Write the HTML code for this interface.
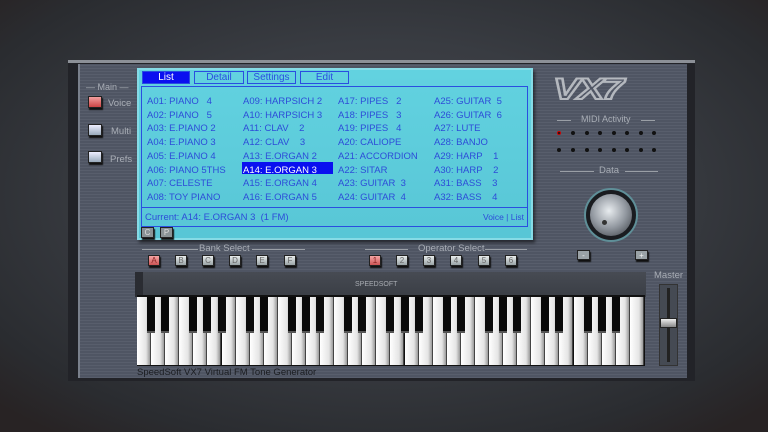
<!DOCTYPE html>
<html><head><meta charset="utf-8"><style>
*{margin:0;padding:0;box-sizing:border-box}
body{width:768px;height:432px;overflow:hidden;position:relative;font-family:"Liberation Sans",sans-serif;
background:radial-gradient(ellipse 70% 70% at 50% 45%,#44484f 0%,#393c42 50%,#2a2c30 85%,#282324 100%);}
.a{position:absolute}
#panel{left:68px;top:60px;width:627px;height:321px;background:#222328;border-top:3px solid #8c9097;}
#inner{left:78px;top:64px;width:609px;height:314px;background:repeating-linear-gradient(0deg,#585e6c 0 1px,#4f5563 1px 3px);border-left:2px solid #7a808c}
#lcd{left:137px;top:68px;width:396px;height:172px;background:linear-gradient(#62d2e0,#58c6d6);border:2px solid #86dbe6;box-shadow:2px 3px 3px rgba(0,0,0,.5)}
.tab{position:absolute;top:71px;height:13px;border:1px solid #2a4ee0;color:#2a4ee0;font-size:10px;text-align:center;line-height:11px}
.t{position:absolute;font-size:9.5px;color:#2d4cd8;white-space:nowrap}
.btn{position:absolute;width:12px;height:11px;background:linear-gradient(#e8ecec,#9aa4a6);border:1px solid #222;font-size:8px;text-align:center;line-height:9px;color:#666;box-shadow:1px 2px 1px #111}
.lbl{position:absolute;font-size:9.5px;color:#a9aeb6;white-space:nowrap}
.line{position:absolute;height:1px;background:#9a9fa6}
.dot{position:absolute;width:4px;height:4px;border-radius:2px;background:#111}
.wk{position:absolute;top:297px;height:68px;background:linear-gradient(90deg,#fff,#e4e4e4 70%,#9a9a9a);border-right:1px solid #444}
.bk{position:absolute;top:297px;width:8px;height:36px;background:#0a0a0a;border-bottom:2px solid #555}
</style></head><body>
<div id="panel" class="a"></div>
<div id="inner" class="a"></div>
<div class="lbl" style="left:86px;top:82px;font-size:9px">— Main —</div>
<div class="a" style="left:88px;top:96px;width:14px;height:12px;background:linear-gradient(#f3a0a0,#c44);border:1px solid #222;box-shadow:1px 2px 1px #111"></div>
<div class="lbl" style="left:108px;top:98px">Voice</div>
<div class="a" style="left:88px;top:124px;width:14px;height:12px;background:linear-gradient(#eef,#9ab);border:1px solid #222;box-shadow:1px 2px 1px #111"></div>
<div class="lbl" style="left:111px;top:126px">Multi</div>
<div class="a" style="left:88px;top:151px;width:14px;height:12px;background:linear-gradient(#eef,#9ab);border:1px solid #222;box-shadow:1px 2px 1px #111"></div>
<div class="lbl" style="left:110px;top:154px">Prefs</div>

<div id="lcd" class="a"></div>
<div class="tab" style="left:142px;width:48px;background:#0a10f0;color:#fff">List</div>
<div class="tab" style="left:194px;width:50px">Detail</div>
<div class="tab" style="left:247px;width:49px">Settings</div>
<div class="tab" style="left:300px;width:49px">Edit</div>
<div class="a" style="left:141px;top:86px;width:387px;height:122px;border:1px solid #2a4ee0"></div>
<div class="a" style="left:141px;top:207px;width:387px;height:20px;border:1px solid #2a4ee0"></div>
<div class="a" style="left:242px;top:162px;width:91px;height:12px;background:#0a10f0"></div>
<div class="t" style="left:147px;top:95px;line-height:13.7px">A01: PIANO&nbsp;&nbsp;&nbsp;4<br>A02: PIANO&nbsp;&nbsp;&nbsp;5<br>A03: E.PIANO 2<br>A04: E.PIANO 3<br>A05: E.PIANO 4<br>A06: PIANO 5THS<br>A07: CELESTE<br>A08: TOY PIANO</div>
<div class="t" style="left:243px;top:95px;line-height:13.7px">A09: HARPSICH 2<br>A10: HARPSICH 3<br>A11: CLAV&nbsp;&nbsp;&nbsp;&nbsp;2<br>A12: CLAV&nbsp;&nbsp;&nbsp;&nbsp;3<br>A13: E.ORGAN 2<br><span style="color:#fff">A14: E.ORGAN 3</span><br>A15: E.ORGAN 4<br>A16: E.ORGAN 5</div>
<div class="t" style="left:338px;top:95px;line-height:13.7px">A17: PIPES&nbsp;&nbsp;&nbsp;2<br>A18: PIPES&nbsp;&nbsp;&nbsp;3<br>A19: PIPES&nbsp;&nbsp;&nbsp;4<br>A20: CALIOPE<br>A21: ACCORDION<br>A22: SITAR<br>A23: GUITAR&nbsp;&nbsp;3<br>A24: GUITAR&nbsp;&nbsp;4</div>
<div class="t" style="left:434px;top:95px;line-height:13.7px">A25: GUITAR&nbsp;&nbsp;5<br>A26: GUITAR&nbsp;&nbsp;6<br>A27: LUTE<br>A28: BANJO<br>A29: HARP&nbsp;&nbsp;&nbsp;&nbsp;1<br>A30: HARP&nbsp;&nbsp;&nbsp;&nbsp;2<br>A31: BASS&nbsp;&nbsp;&nbsp;&nbsp;3<br>A32: BASS&nbsp;&nbsp;&nbsp;&nbsp;4</div>
<div class="t" style="left:145px;top:212px">Current: A14: E.ORGAN 3&nbsp;&nbsp;(1 FM)</div>
<div class="t" style="left:483px;top:212px;font-size:8.5px">Voice | List</div>
<div class="btn" style="left:141px;top:227px;width:13px;background:#8a9396;color:#ddd">C</div>
<div class="btn" style="left:160px;top:227px;width:13px;background:#8a9396;color:#ddd">P</div>

<div class="line" style="left:142px;top:249px;width:56px"></div>
<div class="lbl" style="left:199px;top:243px">Bank Select</div>
<div class="line" style="left:252px;top:249px;width:53px"></div>
<div class="line" style="left:365px;top:249px;width:43px"></div>
<div class="lbl" style="left:418px;top:243px">Operator Select</div>
<div class="line" style="left:485px;top:249px;width:42px"></div>
<div class="btn" style="left:148px;top:255px;background:linear-gradient(#f5a5a5,#c55);color:#822">A</div>
<div class="btn" style="left:175px;top:255px">B</div>
<div class="btn" style="left:202px;top:255px">C</div>
<div class="btn" style="left:229px;top:255px">D</div>
<div class="btn" style="left:256px;top:255px">E</div>
<div class="btn" style="left:284px;top:255px">F</div>
<div class="btn" style="left:369px;top:255px;background:linear-gradient(#f5a5a5,#c55);color:#822">1</div>
<div class="btn" style="left:396px;top:255px">2</div>
<div class="btn" style="left:423px;top:255px">3</div>
<div class="btn" style="left:450px;top:255px">4</div>
<div class="btn" style="left:478px;top:255px">5</div>
<div class="btn" style="left:505px;top:255px">6</div>

<div class="a" style="left:553px;top:73px;font-size:30px;font-weight:bold;font-style:italic;color:transparent;letter-spacing:-2px;-webkit-text-stroke:2px #b4b8be;transform:scaleX(1.35);transform-origin:left">VX7</div>
<div class="line" style="left:557px;top:120px;width:14px"></div>
<div class="lbl" style="left:581px;top:114px;font-size:9px">MIDI Activity</div>
<div class="line" style="left:641px;top:120px;width:14px"></div>
<div class="dot" style="left:557px;top:131px;border:1px solid #c00"></div>
<div class="dot" style="left:571px;top:131px"></div><div class="dot" style="left:585px;top:131px"></div><div class="dot" style="left:598px;top:131px"></div><div class="dot" style="left:612px;top:131px"></div><div class="dot" style="left:625px;top:131px"></div><div class="dot" style="left:639px;top:131px"></div><div class="dot" style="left:652px;top:131px"></div>
<div class="dot" style="left:557px;top:148px"></div><div class="dot" style="left:571px;top:148px"></div><div class="dot" style="left:585px;top:148px"></div><div class="dot" style="left:598px;top:148px"></div><div class="dot" style="left:612px;top:148px"></div><div class="dot" style="left:625px;top:148px"></div><div class="dot" style="left:639px;top:148px"></div><div class="dot" style="left:652px;top:148px"></div>
<div class="line" style="left:560px;top:171px;width:34px"></div>
<div class="lbl" style="left:599px;top:165px">Data</div>
<div class="line" style="left:625px;top:171px;width:33px"></div>
<div class="a" style="left:584px;top:188px;width:54px;height:54px;border-radius:50%;background:#1a1c20;border:2px solid #5f8f98"></div>
<div class="a" style="left:590px;top:194px;width:42px;height:42px;border-radius:50%;background:radial-gradient(circle at 45% 40%,#e8ecef,#9298a0 50%,#34383e)"></div>
<div class="a" style="left:602px;top:220px;width:5px;height:5px;border-radius:50%;background:#333"></div>
<div class="btn" style="left:577px;top:250px;width:13px;height:10px;background:#9aa2a6;color:#eee">-</div>
<div class="btn" style="left:635px;top:250px;width:13px;height:10px;background:#9aa2a6;color:#eee">+</div>

<div class="lbl" style="left:654px;top:270px">Master</div>
<div class="a" style="left:659px;top:284px;width:19px;height:82px;background:#454a53;border:1px solid #333"></div>
<div class="a" style="left:667px;top:288px;width:3px;height:74px;background:#222"></div>
<div class="a" style="left:660px;top:318px;width:17px;height:10px;background:linear-gradient(#eee,#888);border:1px solid #222"></div>

<div class="a" style="left:135px;top:272px;width:511px;height:25px;background:linear-gradient(#474b53,#3a3e45);border-left:8px solid #2a2c32"></div>
<div class="a" style="left:355px;top:281px;font-size:7px;color:#a8acb2">SPEEDSOFT</div>
<div class="a" style="left:137px;top:295px;width:508px;height:71px;background:#111"></div>
<div id="kb"></div>
<div class="lbl" style="left:137px;top:367px;color:#1a1c20;font-size:9.5px">SpeedSoft VX7 Virtual FM Tone Generator</div>
<script>
var h='',w=14.08,x0=137;
for(var i=0;i<36;i++)h+='<div class="wk" style="left:'+(x0+i*w).toFixed(1)+'px;width:'+w.toFixed(1)+'px"></div>';
var pat=[1,1,0,1,1,1,0];
for(var i=0;i<35;i++)if(pat[i%7])h+='<div class="bk" style="left:'+(x0+(i+1)*w-4).toFixed(1)+'px"></div>';
document.getElementById('kb').outerHTML=h;
</script>
</body></html>
